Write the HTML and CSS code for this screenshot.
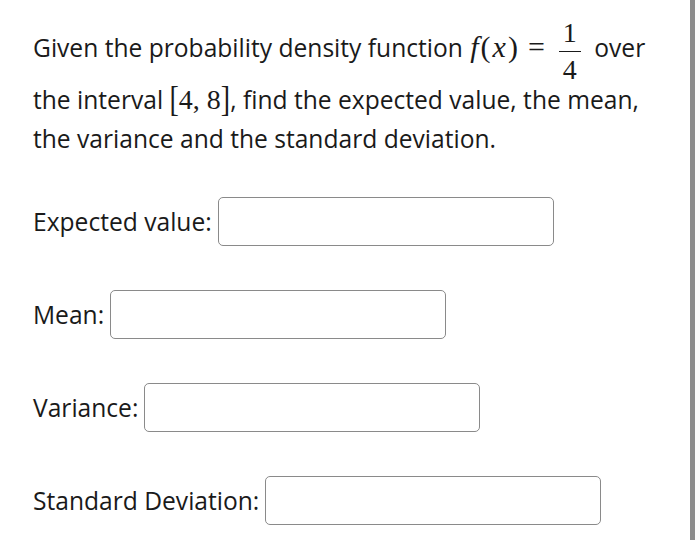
FILE: index.html
```html
<!DOCTYPE html>
<html lang="en">
<head>
<meta charset="utf-8">
<link rel="stylesheet" href="styles.css">
</head>
<body>
<div class="page">
  <p class="question">Given the probability density function <span class="math fx"><i>f</i>(<i>x</i>)</span><span class="eq">=</span><span class="frac"><span class="num">1</span><span class="den">4</span></span> over the interval <span class="math"><span class="br">[</span>4, 8<span class="br">]</span></span>, find the expected value, the mean, the variance and the standard deviation.</p>
  <div class="row"><label>Expected value:</label><span class="field"></span></div>
  <div class="row"><label>Mean:</label><span class="field"></span></div>
  <div class="row"><label>Variance:</label><span class="field"></span></div>
  <div class="row"><label>Standard Deviation:</label><span class="field"></span></div>
</div>
</body>
</html>
```
FILE: styles.css
```css
html, body {
  margin: 0;
  padding: 0;
  background: #fafafa;
}
.page {
  width: 695px;
  height: 540px;
  box-sizing: border-box;
  background: #ffffff;
  border-right: 5px solid #8a8a8a;
  padding: 21px 0 0 33px;
  font-family: "Open Sans", "Noto Sans", sans-serif;
  font-size: 24.6px;
  color: #1a1a1a;
}
.question {
  margin: 0 0 39px 0;
  line-height: 39px;
  width: 630px;
}
.math {
  font-family: "Liberation Serif", "DejaVu Serif", serif;
  font-size: 28px;
}
.fx {
  font-size: 30px;
  letter-spacing: 1px;
}
.math i {
  font-style: italic;
  padding: 0 1px;
}
.br {
  display: inline-block;
  transform: scaleY(1.25);
}
.eq {
  font-family: "Liberation Serif", serif;
  font-size: 30px;
  margin: 0 14px 0 9px;
}
.frac {
  display: inline-flex;
  flex-direction: column;
  align-items: center;
  vertical-align: middle;
  font-family: "Liberation Serif", serif;
  font-size: 28px;
  line-height: 22px;
  margin-right: 7px;
  position: relative;
  top: 1px;
}
.num {
  padding: 0 4px 7px;
  border-bottom: 1.5px solid #1a1a1a;
}
.den {
  padding: 7px 4px 0;
}
.row {
  display: flex;
  align-items: center;
  gap: 6px;
  height: 49px;
  margin-bottom: 44px;
}
.field {
  width: 334px;
  height: 47px;
  border: 1px solid #8a8a8a;
  border-radius: 5px;
  background: #fff;
}
```
